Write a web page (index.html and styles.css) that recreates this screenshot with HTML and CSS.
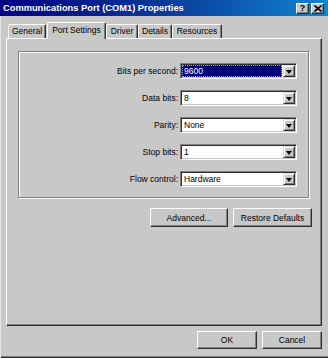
FILE: index.html
```html
<!DOCTYPE html>
<html>
<head>
<meta charset="utf-8">
<link rel="stylesheet" href="styles.css">
</head>
<body>
<div class="window">
  <div class="titlebar">
    <span class="title">Communications Port (COM1) Properties</span>
    <div class="tbtns">
      <span class="tbtn help">?</span>
      <span class="tbtn close"><svg width="8" height="7" viewBox="0 0 8 7"><path d="M0.5 0.5 L7.5 6.5 M7.5 0.5 L0.5 6.5" stroke="#000" stroke-width="1.6" fill="none"/></svg></span>
    </div>
  </div>
  <div class="tabs">
    <div class="tab t-general">General</div>
    <div class="tab active t-port">Port Settings</div>
    <div class="tab t-driver">Driver</div>
    <div class="tab t-details">Details</div>
    <div class="tab t-res">Resources</div>
  </div>
  <div class="panel">
    <div class="group">
      <label class="lbl">Bits per second:</label>
      <div class="combo"><span class="val focus">9600</span><span class="drop"></span></div>
      <label class="lbl">Data bits:</label>
      <div class="combo"><span class="val">8</span><span class="drop"></span></div>
      <label class="lbl">Parity:</label>
      <div class="combo"><span class="val">None</span><span class="drop"></span></div>
      <label class="lbl">Stop bits:</label>
      <div class="combo"><span class="val">1</span><span class="drop"></span></div>
      <label class="lbl">Flow control:</label>
      <div class="combo"><span class="val">Hardware</span><span class="drop"></span></div>
    </div>
    <div class="panel-buttons">
      <button class="btn b-adv">Advanced...</button>
      <button class="btn b-restore">Restore Defaults</button>
    </div>
  </div>
  <div class="dlg-buttons">
    <button class="btn b-dlg">OK</button>
    <button class="btn b-dlg">Cancel</button>
  </div>
</div>
</body>
</html>
```
FILE: styles.css
```css
html, body {
  margin: 0;
  padding: 0;
  background: #c8c8c8;
}
body {
  font-family: "Liberation Sans", Arial, sans-serif;
  font-size: 8.5px;
  color: #000;
}
.window {
  width: 328px;
  height: 358px;
  box-sizing: border-box;
  background: #c8c8c8;
  box-shadow: inset 1px 0 0 #e4e4e4, inset 0 -1px 0 #303030, inset 0 -2px 0 #808080;
  overflow: hidden;
}
.titlebar {
  height: 16px;
  display: flex;
  align-items: center;
  justify-content: space-between;
  padding: 0 4px 0 3px;
  background: linear-gradient(to right, #000080 0%, #0a3a9a 50%, #1084d0 100%);
  color: #fff;
}
.title {
  font-weight: bold;
  font-size: 9.3px;
  white-space: nowrap;
}
.tbtns {
  display: flex;
  gap: 2px;
}
.tbtn {
  width: 13px;
  height: 11px;
  box-sizing: border-box;
  background: #c8c8c8;
  border: 1px solid;
  border-color: #ffffff #303030 #303030 #ffffff;
  box-shadow: inset -1px -1px 0 #808080;
  display: flex;
  align-items: center;
  justify-content: center;
  color: #000;
  font-weight: bold;
  font-size: 9px;
  line-height: 9px;
}
.tabs {
  display: flex;
  align-items: flex-end;
  height: 16px;
  margin-top: 6px;
  padding-left: 8px;
}
.tab {
  height: 14px;
  box-sizing: border-box;
  border: 1px solid;
  border-bottom: none;
  border-color: #ffffff #303030 transparent #ffffff;
  border-radius: 2px 2px 0 0;
  box-shadow: inset -1px 0 0 #808080;
  background: #c8c8c8;
  text-align: center;
  line-height: 13px;
  white-space: nowrap;
}
.t-general { width: 38px; }
.t-port { width: 59px; margin-left: 1px; }
.t-driver { width: 32px; }
.t-details { width: 34px; }
.t-res { width: 50px; }
.tab.active {
  height: 17px;
  margin-bottom: -1px;
  position: relative;
  z-index: 2;
  line-height: 14px;
}
.panel {
  margin-left: 6px;
  width: 316px;
  height: 288px;
  box-sizing: border-box;
  border: 1px solid;
  border-color: #ffffff #303030 #303030 #ffffff;
  box-shadow: inset -1px -1px 0 #808080;
  padding-top: 12px;
  padding-left: 11px;
}
.group {
  width: 291px;
  height: 147px;
  box-sizing: border-box;
  border: 1px solid #808080;
  box-shadow: inset 1px 1px 0 #ffffff, 1px 1px 0 #ffffff;
  display: grid;
  grid-template-columns: 159px 117px;
  grid-auto-rows: 16px;
  column-gap: 2px;
  row-gap: 11px;
  padding-top: 11px;
  align-content: start;
}
.lbl {
  text-align: right;
  line-height: 16px;
  white-space: nowrap;
}
.combo {
  box-sizing: border-box;
  width: 117px;
  height: 16px;
  border: 1px solid;
  border-color: #808080 #ffffff #ffffff #808080;
  box-shadow: inset 1px 1px 0 #303030, inset -1px -1px 0 #c8c8c8;
  background: #fff;
  padding: 1px;
  display: flex;
}
.val {
  flex: 1;
  line-height: 12px;
  padding-left: 2px;
  white-space: nowrap;
}
.val.focus {
  background: #000080;
  color: #fff;
  margin-right: 1px;
  outline: 1px dotted #a0a0e0;
  outline-offset: -1px;
}
.drop {
  width: 12px;
  height: 12px;
  box-sizing: border-box;
  background: #c8c8c8;
  border: 1px solid;
  border-color: #dcdcdc #303030 #303030 #dcdcdc;
  box-shadow: inset 1px 1px 0 #fff, inset -1px -1px 0 #808080;
  display: flex;
  align-items: center;
  justify-content: center;
}
.drop::after {
  content: "";
  width: 0;
  height: 0;
  border-left: 3.5px solid transparent;
  border-right: 3.5px solid transparent;
  border-top: 4px solid #000;
  margin-top: 1px;
}
.panel-buttons {
  display: flex;
  justify-content: flex-end;
  gap: 5px;
  margin-top: 10px;
  padding-right: 9px;
}
.btn {
  height: 19px;
  box-sizing: border-box;
  margin: 0;
  padding: 0;
  background: #c8c8c8;
  border: 1px solid;
  border-color: #ffffff #303030 #303030 #ffffff;
  box-shadow: inset -1px -1px 0 #808080;
  font-family: "Liberation Sans", Arial, sans-serif;
  font-size: 8.5px;
  color: #000;
  white-space: nowrap;
}
.b-adv { width: 78px; }
.b-restore { width: 79px; }
.dlg-buttons {
  display: flex;
  justify-content: flex-end;
  gap: 5px;
  margin-top: 5px;
  padding-right: 6px;
}
.b-dlg { width: 60px; height: 18px; }
```
